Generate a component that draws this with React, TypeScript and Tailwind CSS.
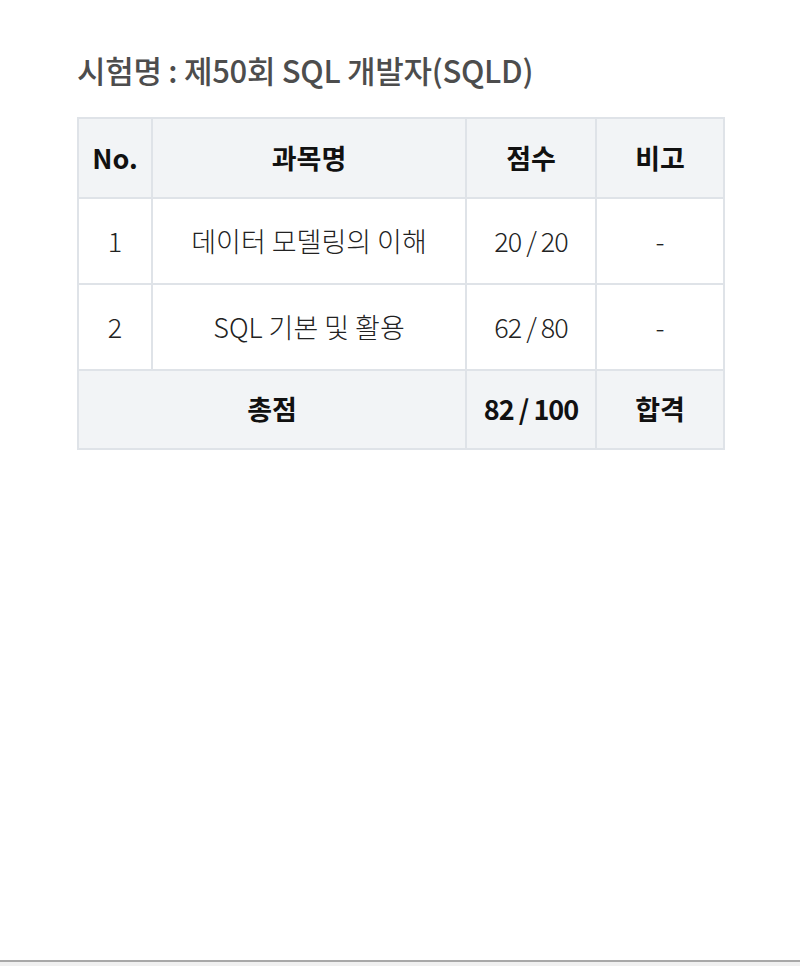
import React from 'react';

const rows = [
  { no: '1', name: '데이터 모델링의 이해', score: '20 / 20', note: '-' },
  { no: '2', name: 'SQL 기본 및 활용', score: '62 / 80', note: '-' },
];

export default function App() {
  return (
    <div
      className="relative w-[800px] h-[966px] bg-white"
      style={{ fontFamily: '"Noto Sans CJK KR", "Noto Sans", sans-serif' }}
    >
      <div className="pl-[77px] pt-[47px]">
        <h1 className="text-[31px] font-medium text-[#4d4d4d] leading-[46px] tracking-[-0.3px]">
          시험명 : 제50회 SQL 개발자(SQLD)
        </h1>
        <table className="mt-[24px] w-[648px] border-collapse border-2 border-[#dfe3e8] text-[27px] text-[#222]">
          <thead>
            <tr className="h-[80px] bg-[#f2f4f6] font-bold text-[#111]">
              <th className="w-[74px] border-2 border-[#dfe3e8] font-bold">No.</th>
              <th className="w-[314px] border-2 border-[#dfe3e8] font-bold">과목명</th>
              <th className="w-[130px] border-2 border-[#dfe3e8] font-bold">점수</th>
              <th className="border-2 border-[#dfe3e8] font-bold">비고</th>
            </tr>
          </thead>
          <tbody className="font-light">
            {rows.map((r) => (
              <tr key={r.no} className="h-[86px]">
                <td className="border-2 border-[#dfe3e8] text-center">{r.no}</td>
                <td className="border-2 border-[#dfe3e8] text-center">{r.name}</td>
                <td className="border-2 border-[#dfe3e8] text-center tracking-[-1px]">{r.score}</td>
                <td className="border-2 border-[#dfe3e8] text-center">{r.note}</td>
              </tr>
            ))}
            <tr className="h-[79px] bg-[#f2f4f6] font-bold text-[#111]">
              <td colSpan={2} className="border-2 border-[#dfe3e8] text-center">총점</td>
              <td className="border-2 border-[#dfe3e8] text-center tracking-[-1px]">82 / 100</td>
              <td className="border-2 border-[#dfe3e8] text-center">합격</td>
            </tr>
          </tbody>
        </table>
      </div>
      <div className="absolute bottom-0 left-0 w-full h-[6px] border-t-2 border-[#a8a8a8] bg-[#f0f0f0]" />
    </div>
  );
}
